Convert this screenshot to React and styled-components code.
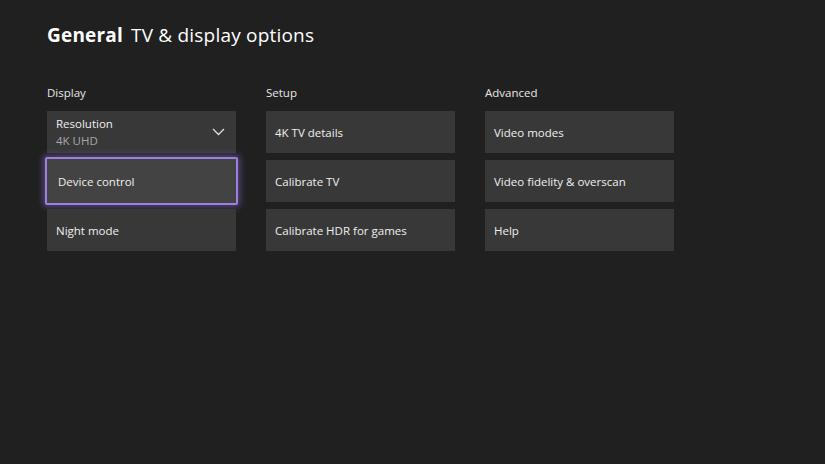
import React from "react";
import styled, { createGlobalStyle } from "styled-components";

const G = createGlobalStyle`
  body{margin:0;background:#202020;font-family:"Open Sans","Noto Sans",sans-serif;}
`;
const Page = styled.div`width:825px;height:464px;background:#202020;padding:22px 0 0 47px;box-sizing:border-box;color:#fff;`;
const Title = styled.div`font-size:19px;display:flex;gap:8px;align-items:baseline;margin-bottom:36px;letter-spacing:0.2px;
  b{font-weight:700;} span{font-weight:400;}`;
const Cols = styled.div`display:flex;gap:30px;`;
const Col = styled.div`width:189px;display:flex;flex-direction:column;gap:7px;`;
const Head = styled.div`font-size:11.5px;color:#e8e8e8;margin-bottom:2px;height:18px;line-height:18px;`;
const Tile = styled.div`height:42px;background:#383838;display:flex;align-items:center;justify-content:space-between;
  padding:0 9px;box-sizing:border-box;font-size:11.5px;color:#f0f0f0;
  ${p=>p.$focus?`height:48px;margin:-3px -2px;padding:0 11px;background:#434343;border:2px solid #9d7fe0;box-shadow:0 0 6px 2px rgba(150,110,230,0.45);border-radius:2px;`:""}`;
const Two = styled.div`display:flex;flex-direction:column;gap:2px;small{font-size:11.5px;color:#a8a8a8;}`;

const Chev = () => <svg width="13" height="8" viewBox="0 0 13 8" style={{marginRight:2}}><path d="M1 1l5.5 5.5L12 1" fill="none" stroke="#ddd" strokeWidth="1.3"/></svg>;

export default function App(){
  return <Page><G/>
    <Title><b>General</b><span>TV &amp; display options</span></Title>
    <Cols>
      <Col><Head>Display</Head>
        <Tile><Two><span>Resolution</span><small>4K UHD</small></Two><Chev/></Tile>
        <Tile $focus>Device control</Tile>
        <Tile>Night mode</Tile>
      </Col>
      <Col><Head>Setup</Head>
        <Tile>4K TV details</Tile><Tile>Calibrate TV</Tile><Tile>Calibrate HDR for games</Tile>
      </Col>
      <Col><Head>Advanced</Head>
        <Tile>Video modes</Tile><Tile>Video fidelity &amp; overscan</Tile><Tile>Help</Tile>
      </Col>
    </Cols>
  </Page>;
}
